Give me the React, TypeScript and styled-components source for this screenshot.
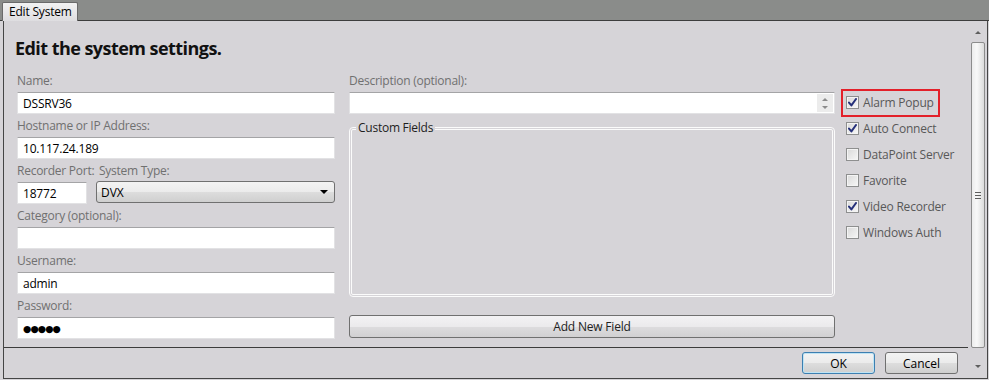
import React from "react";
import styled, { createGlobalStyle } from "styled-components";

const GlobalStyle = createGlobalStyle`
  html, body { margin: 0; padding: 0; }
  body {
    width: 989px;
    height: 380px;
    overflow: hidden;
    background: #d6d4d8;
    font-family: "Open Sans", "Noto Sans", "DejaVu Sans", sans-serif;
    font-size: 12px;
  }
  * { box-sizing: border-box; }
`;

const Page = styled.div`
  width: 989px;
  height: 380px;
  display: flex;
  flex-direction: column;
`;

const TabStrip = styled.div`
  height: 21px;
  flex: none;
  background: #8a8c8a;
  border-bottom: 1px solid #3d3d3d;
  padding: 2px 0 0 2px;
  display: flex;
  align-items: flex-start;
`;

const Tab = styled.div`
  position: relative;
  height: 19px;
  padding: 0 5px 0 6px;
  background: linear-gradient(#f2f2f2, #dedde0);
  border: 1px solid #6a6a6a;
  border-bottom: none;
  border-radius: 2px 2px 0 0;
  color: #000;
  line-height: 17px;
  font-size: 12px;
  letter-spacing: -0.2px;
  margin-bottom: -1px;
  z-index: 1;
`;

const Panel = styled.div`
  flex: 1;
  margin: 0 1px 1px 3px;
  border: 1px solid #454545;
  border-top: none;
  display: grid;
  grid-template-columns: 1fr 19px;
  min-height: 0;
`;

const Content = styled.div`
  display: flex;
  flex-direction: column;
  min-width: 0;
`;

const Main = styled.div`
  flex: 1;
  padding: 15px 0 0 13px;
`;

const Heading = styled.h1`
  margin: 0 0 9px -2px;
  height: 24px;
  font-size: 18px;
  line-height: 24px;
  font-weight: 700;
  color: #111;
  letter-spacing: -0.55px;
`;

const Columns = styled.div`
  display: flex;
  align-items: flex-start;
`;

const LeftCol = styled.div`
  width: 318px;
  margin-right: 14px;
  display: flex;
  flex-direction: column;
`;

const MidCol = styled.div`
  width: 486px;
  margin-right: 6px;
  display: flex;
  flex-direction: column;
`;

const RightCol = styled.div`
  flex: 1;
  padding-top: 20px;
  display: flex;
  flex-direction: column;
  align-items: flex-start;
`;

const Label = styled.div<{ $indent?: number }>`
  height: 23px;
  line-height: 23px;
  color: #707070;
  font-size: 12px;
  letter-spacing: -0.25px;
  padding-left: ${(p) => p.$indent ?? 0}px;
  white-space: nowrap;
`;

const TextBox = styled.input`
  display: block;
  width: 100%;
  height: 22px;
  margin: 0;
  padding: 0 5px;
  border: 1px solid #e2e2e4;
  border-top-color: #a4a4a6;
  background: #fff;
  color: #000;
  font-family: inherit;
  font-size: 12px;
  letter-spacing: -0.2px;
  outline: none;
`;

const PasswordBox = styled(TextBox)`
  font-family: "DejaVu Sans", sans-serif;
  font-size: 9.5px;
  letter-spacing: -0.9px;
  padding-left: 5px;
`;

const PortRow = styled.div`
  display: flex;
  gap: 9px;
`;

const PortLabels = styled.div`
  display: flex;
`;

const PortField = styled.div`
  width: 70px;
  flex: none;
`;

const Select = styled.div`
  flex: 1;
  height: 22px;
  margin-top: -1px;
  border: 1px solid #707070;
  border-radius: 3px;
  background: linear-gradient(#f3f3f3 0%, #ebebeb 50%, #dddddd 51%, #cfcfcf 100%);
  display: flex;
  align-items: center;
  justify-content: space-between;
  padding: 0 5px 0 4px;
  color: #000;
  font-size: 12px;
`;

const SelectArrow = styled.span`
  width: 0;
  height: 0;
  border-left: 4px solid transparent;
  border-right: 4px solid transparent;
  border-top: 4px solid #000;
  margin-right: 1px;
`;

const DescBox = styled.div`
  height: 22px;
  display: flex;
  background: #fff;
  border: 1px solid #e2e2e4;
  border-top-color: #a4a4a6;
`;

const DescInput = styled.input`
  flex: 1;
  border: none;
  outline: none;
  background: transparent;
  font-family: inherit;
  font-size: 12px;
`;

const Spinner = styled.div`
  width: 16px;
  margin: 1px 1px 1px 0;
  background: #ececec;
  display: flex;
  flex-direction: column;
  align-items: center;
  justify-content: center;
  gap: 5px;
`;

const SpinArrow = styled.span<{ $down?: boolean }>`
  width: 0;
  height: 0;
  border-left: 3px solid transparent;
  border-right: 3px solid transparent;
  ${(p) => (p.$down ? "border-top: 3px solid #8c8c8c;" : "border-bottom: 3px solid #8c8c8c;")}
`;

const GroupBox = styled.fieldset`
  margin: 6px 0 0 0;
  height: 177px;
  padding: 0 4px;
  border: 3px double #fbfbfb;
  border-radius: 4px;
`;

const Legend = styled.legend`
  padding: 0 2px;
  font-size: 12px;
  line-height: 16px;
  color: #1e1e1e;
  letter-spacing: -0.25px;
`;

const WideButton = styled.button`
  margin-top: 18px;
  height: 23px;
  width: 100%;
  border: 1px solid #707070;
  border-radius: 3px;
  background: linear-gradient(#f3f2f4 0%, #ebeaec 50%, #dddcde 51%, #d1d0d2 100%);
  font-family: inherit;
  font-size: 12px;
  color: #222;
  letter-spacing: -0.2px;
  padding: 0;
`;

const CheckRow = styled.label`
  position: relative;
  height: 26px;
  display: flex;
  align-items: center;
  gap: 4px;
  padding: 0 8px 0 5px;
  color: #585858;
  font-size: 12px;
  letter-spacing: -0.2px;
  white-space: nowrap;
`;

const Highlight = styled.span`
  position: absolute;
  left: 0;
  top: 0;
  width: 99px;
  height: 28px;
  border: 2px solid #e3202a;
  pointer-events: none;
`;

const Box = styled.span`
  width: 13px;
  height: 13px;
  flex: none;
  border: 1px solid #8e8f8f;
  background: linear-gradient(135deg, #d9d9d9, #f7f7f7);
  box-shadow: inset 0 0 0 1px #f4f4f4;
  display: flex;
  align-items: center;
  justify-content: center;
`;

const Footer = styled.div`
  height: 31px;
  flex: none;
  border-top: 1px solid #3c3c3c;
  display: flex;
  justify-content: flex-end;
  align-items: flex-start;
  gap: 10px;
  padding: 4px 10px 0 0;
`;

const DialogButton = styled.button<{ $default?: boolean }>`
  width: 73px;
  height: 22px;
  border: 1px solid ${(p) => (p.$default ? "#3c7fb1" : "#707070")};
  border-radius: 3px;
  background: linear-gradient(#f3f3f3 0%, #ebebeb 50%, #dddddd 51%, #cfcfcf 100%);
  box-shadow: ${(p) => (p.$default ? "inset 0 0 0 1px #bfe3f3" : "none")};
  font-family: inherit;
  font-size: 12px;
  color: #000;
  padding: 0;
`;

const ScrollBar = styled.div`
  display: flex;
  flex-direction: column;
  align-items: center;
  padding: 3px 1px 4px 1px;
`;

const ScrollArrow = styled.div`
  height: 16px;
  width: 100%;
  display: flex;
  align-items: center;
  justify-content: center;
`;

const ArrowGlyph = styled.span<{ $down?: boolean }>`
  width: 0;
  height: 0;
  border-left: 3px solid transparent;
  border-right: 3px solid transparent;
  ${(p) => (p.$down ? "border-top: 3px solid #5e5e5e;" : "border-bottom: 3px solid #5e5e5e;")}
`;

const Thumb = styled.div`
  flex: 1;
  width: 14px;
  margin: 2px 0 10px 0;
  border: 1px solid #8c8c8c;
  border-radius: 2px;
  background: linear-gradient(90deg, #ececec, #f8f8f8 40%, #dcdcdc);
  display: flex;
  align-items: center;
  justify-content: center;
`;

const Grip = styled.div`
  width: 6px;
  height: 7px;
  background: repeating-linear-gradient(#5d5d5d 0 1px, transparent 1px 3px);
`;

const Check = () => (
  <svg width="9" height="9" viewBox="0 0 9 9">
    <path d="M1 4.6 L3.4 7.4 L8 1" fill="none" stroke="#25307a" strokeWidth="2" strokeLinecap="round" strokeLinejoin="round" />
  </svg>
);

const options: { label: string; checked: boolean }[] = [
  { label: "Alarm Popup", checked: true },
  { label: "Auto Connect", checked: true },
  { label: "DataPoint Server", checked: false },
  { label: "Favorite", checked: false },
  { label: "Video Recorder", checked: true },
  { label: "Windows Auth", checked: false },
];

export default function App() {
  return (
    <Page>
      <GlobalStyle />
      <TabStrip>
        <Tab>Edit System</Tab>
      </TabStrip>
      <Panel>
        <Content>
          <Main>
            <Heading>Edit the system settings.</Heading>
            <Columns>
              <LeftCol>
                <Label>Name:</Label>
                <TextBox defaultValue="DSSRV36" readOnly />
                <Label>Hostname or IP Address:</Label>
                <TextBox defaultValue="10.117.24.189" readOnly />
                <PortLabels>
                  <PortField>
                    <Label>Recorder Port:</Label>
                  </PortField>
                  <Label $indent={12}>System Type:</Label>
                </PortLabels>
                <PortRow>
                  <PortField>
                    <TextBox defaultValue="18772" readOnly />
                  </PortField>
                  <Select>
                    <span>DVX</span>
                    <SelectArrow />
                  </Select>
                </PortRow>
                <Label>Category (optional):</Label>
                <TextBox defaultValue="" readOnly />
                <Label>Username:</Label>
                <TextBox defaultValue="admin" readOnly />
                <Label>Password:</Label>
                <PasswordBox defaultValue="●●●●●" readOnly />
              </LeftCol>
              <MidCol>
                <Label>Description (optional):</Label>
                <DescBox>
                  <DescInput defaultValue="" readOnly />
                  <Spinner>
                    <SpinArrow />
                    <SpinArrow $down />
                  </Spinner>
                </DescBox>
                <GroupBox>
                  <Legend>Custom Fields</Legend>
                </GroupBox>
                <WideButton>Add New Field</WideButton>
              </MidCol>
              <RightCol>
                {options.map((o, i) => (
                  <CheckRow key={o.label}>
                    {i === 0 && <Highlight />}
                    <Box>{o.checked && <Check />}</Box>
                    {o.label}
                  </CheckRow>
                ))}
              </RightCol>
            </Columns>
          </Main>
          <Footer>
            <DialogButton $default>OK</DialogButton>
            <DialogButton>Cancel</DialogButton>
          </Footer>
        </Content>
        <ScrollBar>
          <ScrollArrow>
            <ArrowGlyph />
          </ScrollArrow>
          <Thumb>
            <Grip />
          </Thumb>
          <ScrollArrow>
            <ArrowGlyph $down />
          </ScrollArrow>
        </ScrollBar>
      </Panel>
    </Page>
  );
}
